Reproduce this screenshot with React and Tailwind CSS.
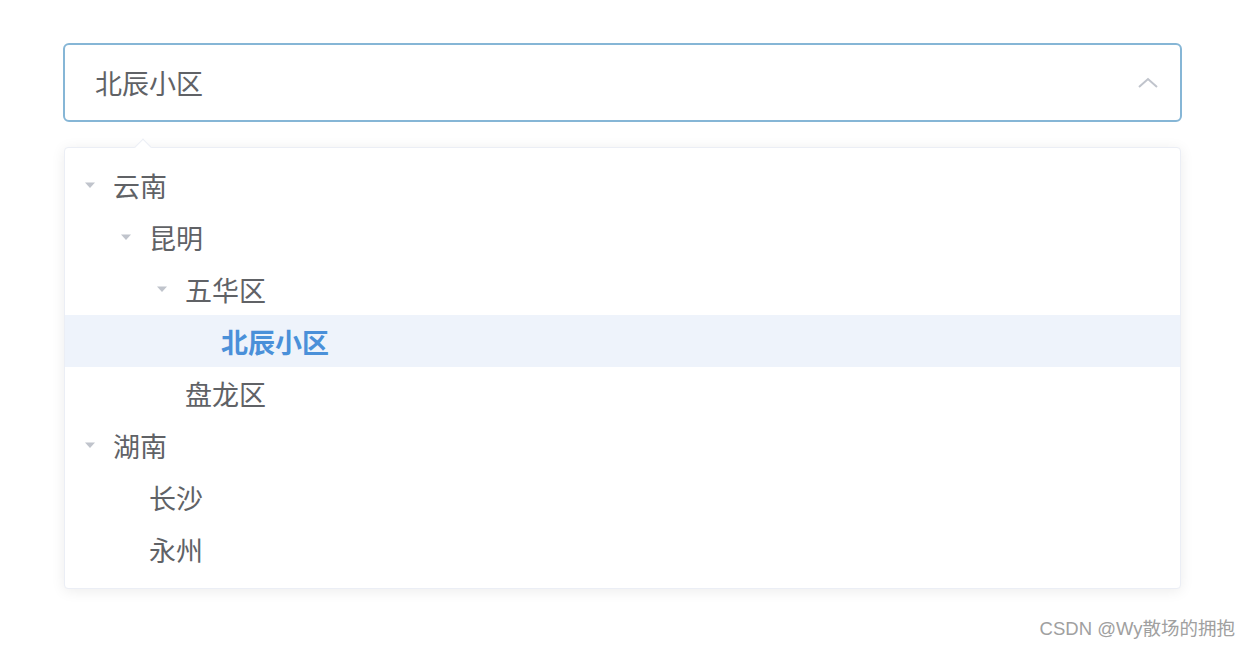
import React from "react";

const font = { fontFamily: '"Noto Sans CJK SC", "Noto Sans", sans-serif' };

const rows = [
  { label: "云南", level: 0, caret: true },
  { label: "昆明", level: 1, caret: true },
  { label: "五华区", level: 2, caret: true },
  { label: "北辰小区", level: 3, selected: true },
  { label: "盘龙区", level: 2 },
  { label: "湖南", level: 0, caret: true },
  { label: "长沙", level: 1 },
  { label: "永州", level: 1 },
];

const indents = ["pl-[19px]", "pl-[55px]", "pl-[91px]", "pl-[127px]"];

function Caret({ show }) {
  return (
    <span className="w-[12px] h-[12px] mr-[17px] flex items-center justify-center">
      {show && (
        <svg width="12" height="8" viewBox="0 0 12 8">
          <path d="M1 1.5 L11 1.5 L6 7 Z" fill="#c0c4cc" />
        </svg>
      )}
    </span>
  );
}

export default function App() {
  return (
    <div className="w-[1250px] h-[646px] bg-white relative overflow-hidden" style={font}>
      <div className="pt-[43px] pl-[63px] w-[1182px]">
        {/* Select input */}
        <div className="h-[79px] border-2 border-[#86b6d6] rounded-[6px] flex items-center justify-between pl-[30px] pr-[21px]">
          <span className="text-[27px] text-[#606266] leading-none">北辰小区</span>
          <svg width="22" height="12" viewBox="0 0 22 12">
            <path d="M2 10 L11 2 L20 10" fill="none" stroke="#c0c4cc" strokeWidth="2" />
          </svg>
        </div>

        {/* Dropdown */}
        <div className="relative mt-[25px] ml-[1px] w-[1117px] border border-[#ebeef5] rounded-[4px] bg-white shadow-[0_2px_14px_rgba(0,0,0,0.08)] pt-[11px] pb-[13px]">
          <div className="absolute -top-[7px] left-[72px] w-[12px] h-[12px] rotate-45 bg-white border-l border-t border-[#ebeef5]" />
          {rows.map((r, i) => (
            <div
              key={i}
              className={`h-[52px] flex items-center ${indents[r.level]} ${r.selected ? "bg-[#eef3fb]" : ""}`}
            >
              <Caret show={r.caret} />
              <span
                className={`text-[27px] leading-none ${
                  r.selected ? "text-[#4a90d9] font-bold" : "text-[#606266]"
                }`}
              >
                {r.label}
              </span>
            </div>
          ))}
        </div>
      </div>

      <div className="absolute right-[15px] top-[615px] text-[18.5px] text-[#a0a0a0]" style={{ fontFamily: '"Liberation Sans", "Noto Sans CJK SC", sans-serif' }}>
        CSDN @Wy散场的拥抱
      </div>
    </div>
  );
}
